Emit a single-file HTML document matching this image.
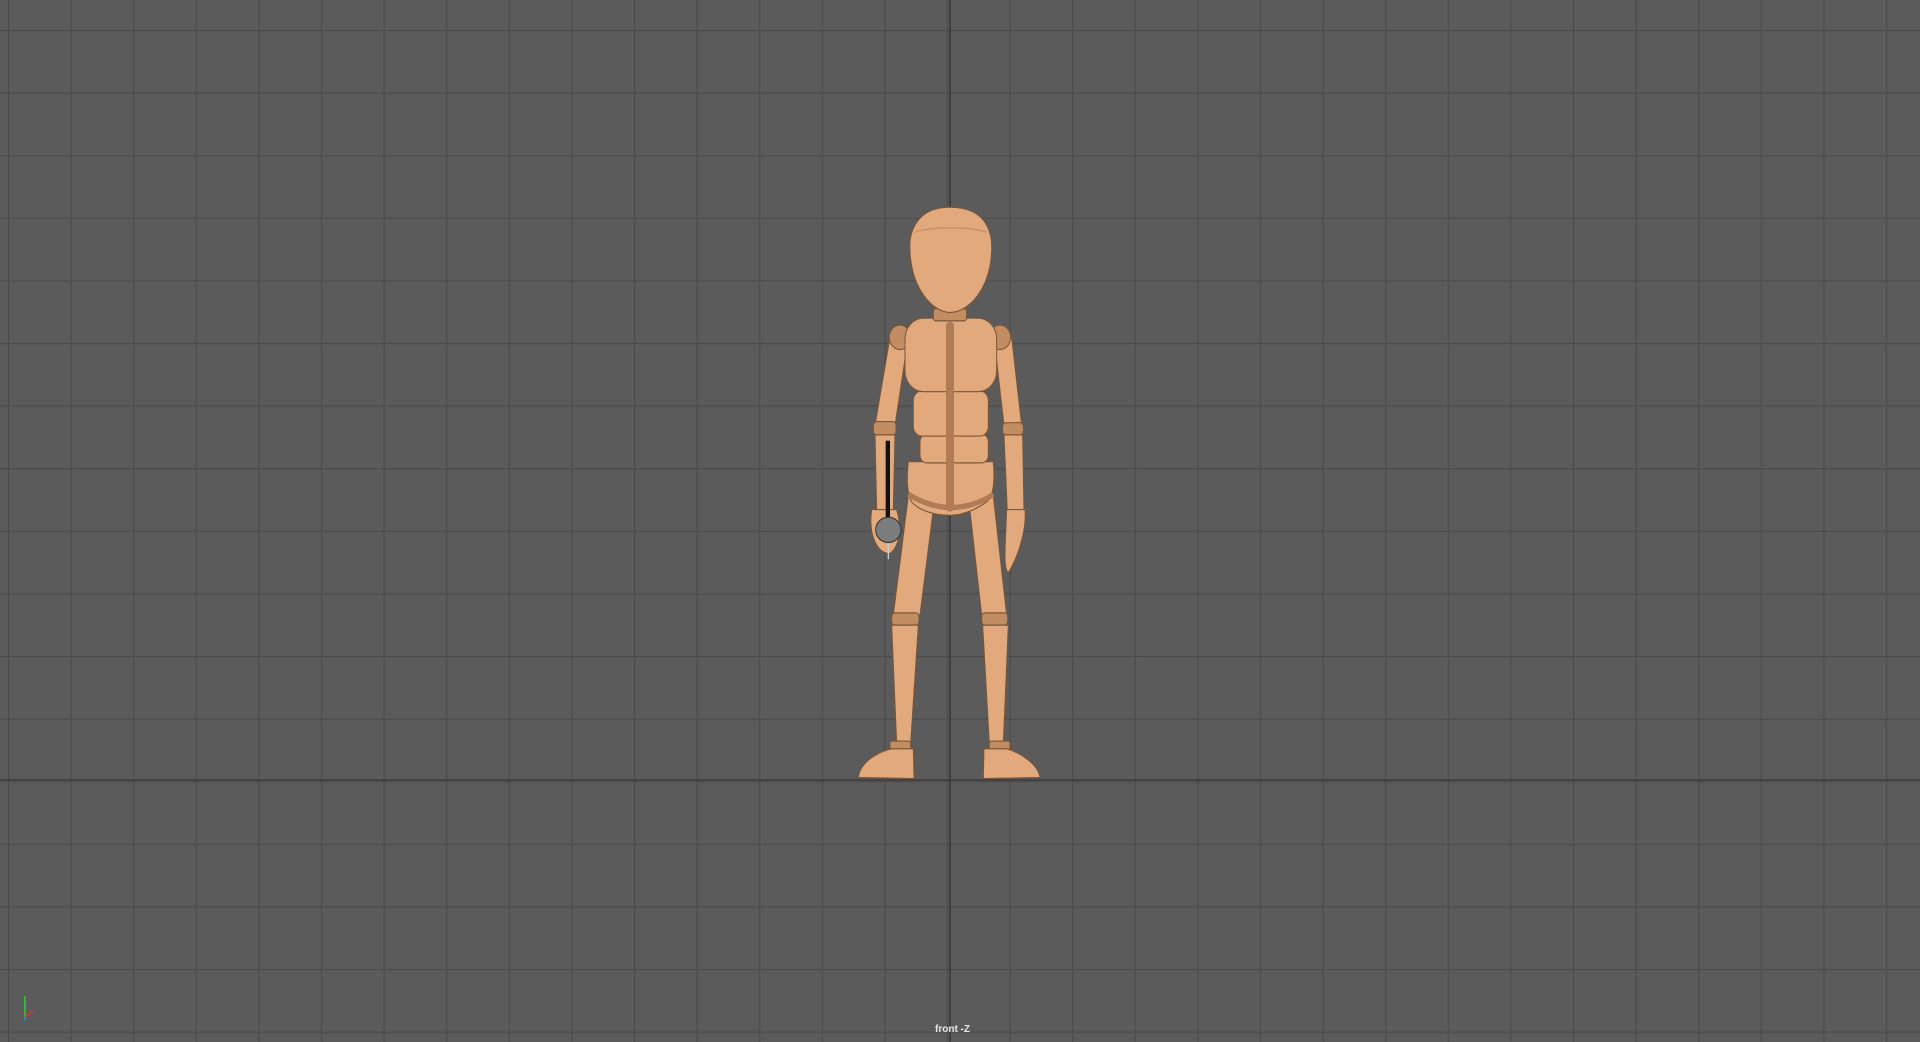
<!DOCTYPE html>
<html><head><style>
html,body{margin:0;padding:0;width:1920px;height:1042px;overflow:hidden;background:#5b5b5b;}
svg{position:absolute;left:0;top:0}
.t{position:absolute;left:935px;top:1024px;font:bold 10px "Liberation Sans",sans-serif;color:#e8e8e8;}
</style></head><body>
<svg width="1920" height="1042">
<defs>
<pattern id="g" x="8" y="30" width="62.6" height="62.6" patternUnits="userSpaceOnUse">
<path d="M0.5 0V62.6M0 0.5H62.6" stroke="#4b4b4b" stroke-width="1.2" fill="none"/>
</pattern>
</defs>
<rect width="1920" height="1042" fill="url(#g)"/>
<line x1="950" y1="0" x2="950" y2="1042" stroke="#383838" stroke-width="1.6"/>
<line x1="0" y1="780" x2="1920" y2="780" stroke="#3a3a3a" stroke-width="1.6"/>
<line x1="25" y1="1017" x2="25" y2="996" stroke="#3c3" stroke-width="1.5"/>
<line x1="25" y1="1017" x2="33" y2="1011" stroke="#d33" stroke-width="1.5"/>
<line x1="25" y1="1017" x2="25" y2="1020" stroke="#38f" stroke-width="1.5"/>
<g transform="translate(840,190) scale(0.3333,0.3827)" stroke="#7a5538" stroke-width="3" fill="#e2aa7c">
<path d="M205 800 L285 800 L240 1110 L160 1110Z"/>
<path d="M385 800 L460 800 L500 1110 L425 1110Z"/>
<rect x="155" y="1105" width="82" height="32" rx="10" fill="#c38d62"/>
<rect x="425" y="1105" width="78" height="32" rx="10" fill="#c38d62"/>
<path d="M155 1137 L235 1137 L212 1445 L170 1445Z"/>
<path d="M428 1137 L505 1137 L490 1445 L448 1445Z"/>
<rect x="150" y="1440" width="62" height="22" rx="6" fill="#c38d62"/>
<rect x="448" y="1440" width="62" height="22" rx="6" fill="#c38d62"/>
<path d="M55 1535 C60 1490 130 1462 160 1460 L220 1460 L222 1538Z"/>
<path d="M430 1538 L432 1460 L500 1460 C540 1470 595 1500 600 1535Z"/>
<path d="M150 385 L205 385 L165 615 L105 615Z"/>
<path d="M462 385 L515 385 L545 615 L492 615Z"/>
<rect x="100" y="605" width="68" height="35" rx="10" fill="#c38d62"/>
<rect x="488" y="608" width="62" height="32" rx="10" fill="#c38d62"/>
<path d="M105 640 L165 640 L160 835 L110 835Z"/>
<path d="M492 640 L548 640 L552 840 L502 840Z"/>
<path d="M95 835 L170 835 C185 880 180 930 150 950 C110 950 85 900 95 835Z"/>
<path d="M500 835 L555 835 C560 880 540 950 505 1000 C490 990 495 940 500 835Z"/>
<circle cx="180" cy="385" r="32" fill="#c38d62"/>
<circle cx="480" cy="385" r="32" fill="#c38d62"/>
<path d="M205 710 L460 710 C465 760 460 800 440 815 C400 840 360 850 330 850 C290 850 240 840 215 815 C200 790 200 750 205 710Z"/>
<path d="M205 795 C250 820 300 830 330 830 C370 830 420 820 460 795" fill="none" stroke="#b07b55" stroke-width="14"/>
<rect x="240" y="638" width="205" height="75" rx="20"/>
<rect x="220" y="525" width="225" height="118" rx="25"/>
<rect x="195" y="335" width="275" height="192" rx="55"/>
<rect x="280" y="310" width="100" height="32" rx="8" fill="#c38d62"/>
<rect x="318" y="345" width="24" height="495" rx="10" fill="#b07b55" stroke="none"/>
<path d="M330 45 C230 45 205 110 210 160 C215 260 280 320 330 320 C385 320 450 260 455 160 C458 100 430 45 330 45Z"/>
<path d="M225 110 C280 95 380 95 440 110" fill="none" stroke="#c99268" stroke-width="4"/>
<rect x="137" y="655" width="13" height="230" fill="#111" stroke="none"/>
<ellipse cx="145" cy="888" rx="38" ry="33" fill="#7a7c7e" stroke="#333" stroke-width="3"/>
<line x1="145" y1="925" x2="145" y2="965" stroke="#ccc" stroke-width="4"/>
</g>
</svg>
<div class="t">front -Z</div>
</body></html>
